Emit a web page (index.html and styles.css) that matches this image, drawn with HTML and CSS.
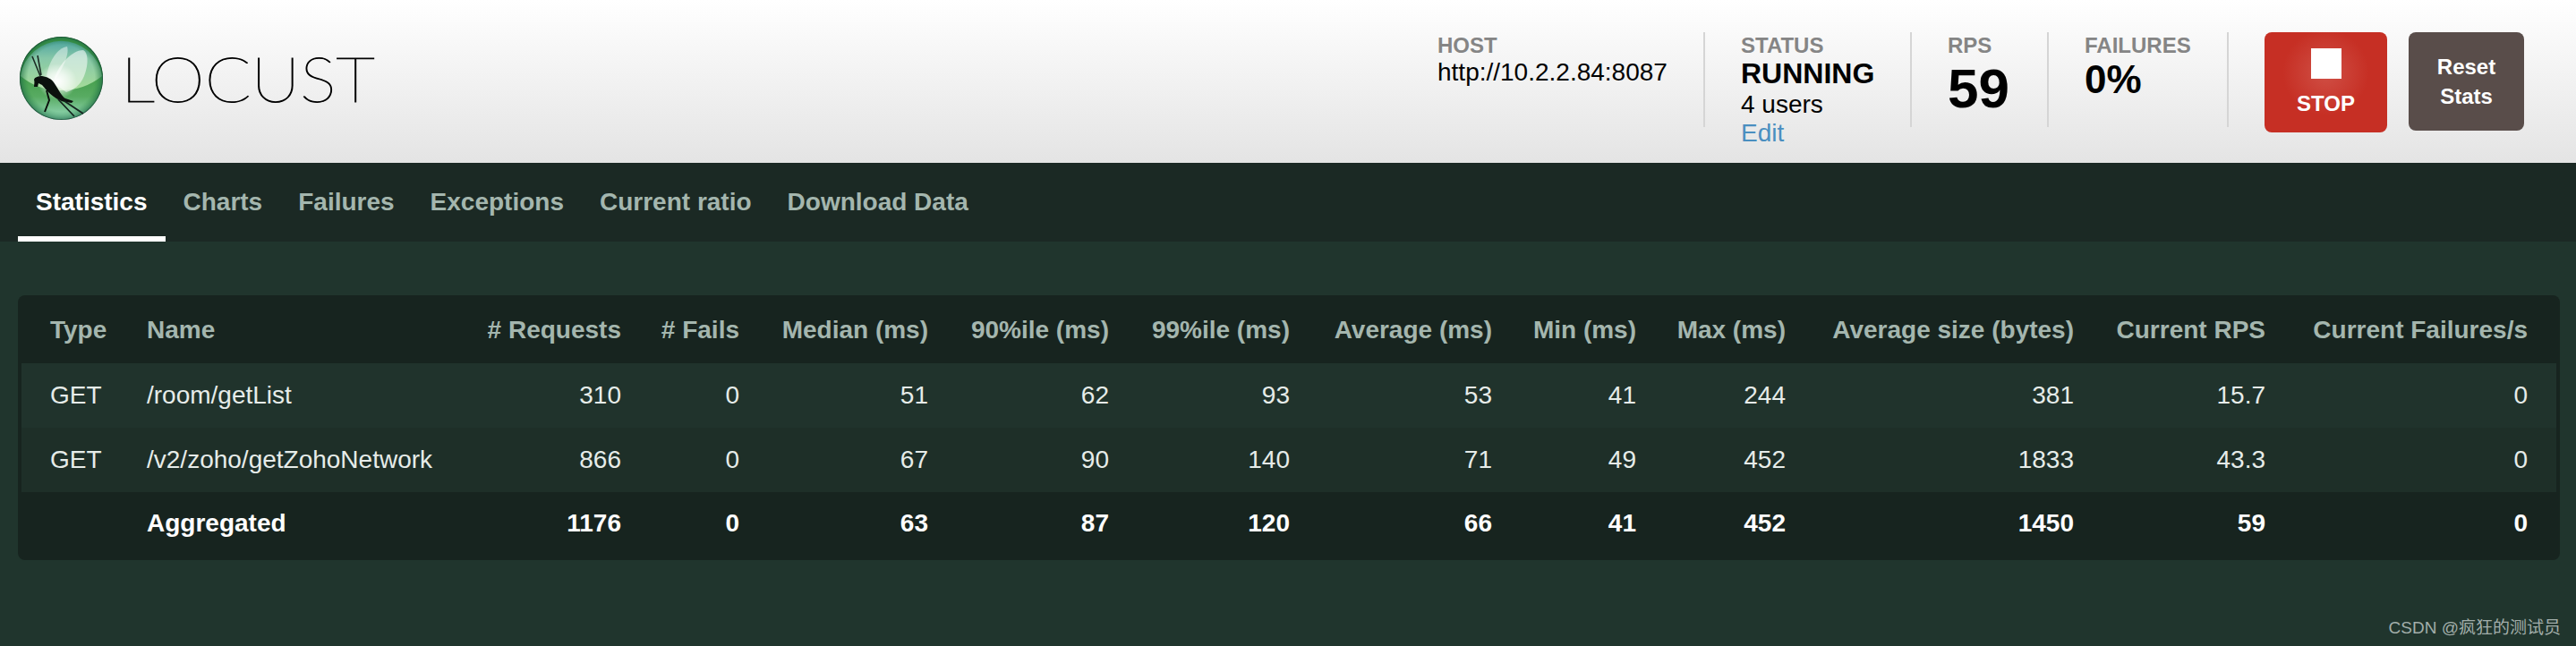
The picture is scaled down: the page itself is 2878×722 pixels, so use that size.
FILE: index.html
```html
<!DOCTYPE html>
<html lang="en">
<head>
<meta charset="utf-8">
<title>Locust</title>
<link rel="stylesheet" href="styles.css">
</head>
<body>
<header class="topbar">
  <a class="brand" href="#">
    <svg class="globe" viewBox="0 0 93 93" width="93" height="93" aria-hidden="true">
      <defs>
        <linearGradient id="sphere" x1="0" y1="0" x2="0" y2="1">
          <stop offset="0.4" stop-color="#3f9a44"/>
          <stop offset="0.72" stop-color="#58ab62"/>
          <stop offset="1" stop-color="#9adcc0"/>
        </linearGradient>
        <linearGradient id="cap" x1="0" y1="0" x2="0" y2="1">
          <stop offset="0" stop-color="#4fa5a0"/>
          <stop offset="0.35" stop-color="#86c7a8"/>
          <stop offset="1" stop-color="#a6dc98"/>
        </linearGradient>
        <radialGradient id="rim" cx="0.5" cy="0.5" r="0.5">
          <stop offset="0.8" stop-color="#2f8a4a" stop-opacity="0"/>
          <stop offset="0.97" stop-color="#1d6b44" stop-opacity="0.6"/>
          <stop offset="1" stop-color="#123f2e" stop-opacity="1"/>
        </radialGradient>
        <radialGradient id="glow" cx="0.5" cy="0.5" r="0.5">
          <stop offset="0" stop-color="#ffffff" stop-opacity="1"/>
          <stop offset="0.5" stop-color="#ffffff" stop-opacity="0.6"/>
          <stop offset="1" stop-color="#ffffff" stop-opacity="0"/>
        </radialGradient>
      </defs>
      <circle cx="46.5" cy="46.5" r="46.5" fill="url(#sphere)"/>
      <path d="M1 44A46 46 0 0 1 92 44Q72 60 46 60Q20 60 1 44Z" fill="url(#cap)"/>
      <circle cx="46.5" cy="46.5" r="46.5" fill="url(#rim)"/>
      <path d="M30 46C31 30 42 12 53 11C56 20 47 38 38 50Z" fill="#fff" fill-opacity="0.45"/>
      <path d="M38 52C40 34 58 15 71 15C77 18 77 32 72 44C68 54 60 60 52 62Z" fill="#fff" fill-opacity="0.55"/>
      <ellipse cx="42" cy="50" rx="22" ry="20" fill="url(#glow)"/>
      <path d="M14 22L23 44M20 21L24 43" stroke="#1c2c24" stroke-width="1.6" fill="none"/>
      <path d="M16 48C17 45 21 44 25 44C31 45 35 47 38 51C43 58 47 67 51 69L60 72L58 74C54 73 50 74 45 71C40 69 35 65 31 61L25 54L21 52L20 56L16 56C16 53 17 51 16 48Z" fill="#0b110d"/>
      <path d="M30 60L33 71L28 84" stroke="#0b110d" stroke-width="2" fill="none"/>
      <path d="M43 70L61 89M50 72L71 86" stroke="#14241f" stroke-width="1.8" fill="none"/>
    </svg>
    <span class="wordmark">LOCUST</span>
  </a>
  <div class="stats">
    <div class="stat stat-host">
      <div class="stat-label">HOST</div>
      <div class="stat-text">http://10.2.2.84:8087</div>
    </div>
    <div class="stat stat-status">
      <div class="stat-label">STATUS</div>
      <div class="stat-strong">RUNNING</div>
      <div class="stat-text">4 users</div>
      <a class="stat-link" href="#">Edit</a>
    </div>
    <div class="stat stat-rps">
      <div class="stat-label">RPS</div>
      <div class="stat-big">59</div>
    </div>
    <div class="stat stat-fail">
      <div class="stat-label">FAILURES</div>
      <div class="stat-pct">0%</div>
    </div>
    <div class="actions">
      <button class="btn-stop" type="button"><span class="stop-square"></span><span>STOP</span></button>
      <button class="btn-reset" type="button">Reset<br>Stats</button>
    </div>
  </div>
</header>
<nav class="tabs">
  <a class="tab tab-active" href="#">Statistics</a>
  <a class="tab" href="#">Charts</a>
  <a class="tab" href="#">Failures</a>
  <a class="tab" href="#">Exceptions</a>
  <a class="tab" href="#">Current ratio</a>
  <a class="tab" href="#">Download Data</a>
</nav>
<main class="content">
  <div class="card">
    <table class="stats-table">
      <colgroup>
        <col class="c-type"><col class="c-name"><col class="c-req"><col class="c-fail"><col class="c-med"><col class="c-p90"><col class="c-p99"><col class="c-avg"><col class="c-min"><col class="c-max"><col class="c-size"><col class="c-rps"><col class="c-fps">
      </colgroup>
      <thead>
        <tr>
          <th class="left">Type</th><th class="left">Name</th><th># Requests</th><th># Fails</th><th>Median (ms)</th><th>90%ile (ms)</th><th>99%ile (ms)</th><th>Average (ms)</th><th>Min (ms)</th><th>Max (ms)</th><th>Average size (bytes)</th><th>Current RPS</th><th>Current Failures/s</th>
        </tr>
      </thead>
      <tbody>
        <tr>
          <td class="left">GET</td><td class="left">/room/getList</td><td>310</td><td>0</td><td>51</td><td>62</td><td>93</td><td>53</td><td>41</td><td>244</td><td>381</td><td>15.7</td><td>0</td>
        </tr>
        <tr>
          <td class="left">GET</td><td class="left">/v2/zoho/getZohoNetwork</td><td>866</td><td>0</td><td>67</td><td>90</td><td>140</td><td>71</td><td>49</td><td>452</td><td>1833</td><td>43.3</td><td>0</td>
        </tr>
      </tbody>
      <tfoot>
        <tr>
          <td class="left"></td><td class="left">Aggregated</td><td>1176</td><td>0</td><td>63</td><td>87</td><td>120</td><td>66</td><td>41</td><td>452</td><td>1450</td><td>59</td><td>0</td>
        </tr>
      </tfoot>
    </table>
  </div>
</main>
<div class="watermark">CSDN @疯狂的测试员</div>
</body>
</html>
```

FILE: styles.css
```css
* { box-sizing: border-box; }
html, body { margin: 0; height: 100%; }
body {
  position: relative;
  overflow: hidden;
  background: #20352d;
  font-family: "Liberation Sans", Arial, sans-serif;
  color: #fff;
}
a { text-decoration: none; }

.topbar {
  height: 182px;
  display: flex;
  justify-content: space-between;
  background: linear-gradient(to bottom, #ffffff 0%, #e4e4e4 100%);
  color: #000;
  padding: 36px 58px 0 22px;
}
.brand { display: flex; align-items: center; height: 102px; color: #000; }
.globe { display: block; flex: none; }
.wordmark {
  display: inline-block;
  margin-left: 20px;
  font-family: "Lato", sans-serif;
  font-weight: 200;
  font-size: 71px;
  line-height: 72px;
  -webkit-text-stroke: 1px #000;
  transform: scaleX(1.07);
  transform-origin: left center;
}
.stats { display: flex; align-items: flex-start; }
.stat {
  height: 106px;
  padding: 0 40px;
  border-right: 2px solid #d5d5d5;
}
.stat-host { width: 299px; padding-left: 0; }
.stat-status { width: 231px; }
.stat-rps { width: 153px; }
.stat-fail { width: 201px; }
.stat-label {
  font-size: 24px;
  line-height: 26px;
  margin-top: 2px;
  font-weight: 700;
  color: #858585;
}
.stat-text { font-size: 28px; line-height: 34px; }
.stat-strong { font-size: 32px; font-weight: 700; line-height: 36px; }
.stat-link { display: block; font-size: 28px; line-height: 30px; color: #4a8fc0; }
.stat-big { font-size: 62px; font-weight: 700; line-height: 70px; }
.stat-pct { font-size: 44px; font-weight: 700; line-height: 46px; margin-top: 2px; }
.actions { display: flex; align-items: flex-start; gap: 24px; margin-left: 40px; }
.btn-stop, .btn-reset {
  border: 0;
  border-radius: 8px;
  color: #fff;
  font-family: inherit;
  font-weight: 700;
  font-size: 24px;
  padding: 0;
}
.btn-stop {
  width: 137px;
  height: 112px;
  display: flex;
  flex-direction: column;
  align-items: center;
  background: radial-gradient(circle at 50% 40%, #d05046 0%, #c62f24 50%);
}
.stop-square { width: 34px; height: 34px; margin-top: 18px; margin-bottom: 14px; background: #fff; }
.btn-reset {
  width: 129px;
  height: 110px;
  background: #594d4a;
  line-height: 33px;
}

.tabs {
  height: 88px;
  display: flex;
  padding: 0 20px;
  background: #1b2924;
}
.tab {
  height: 88px;
  padding: 0 20px;
  font-size: 28px;
  font-weight: 700;
  line-height: 88px;
  color: #a4b6ae;
}
.tab-active { color: #fff; border-bottom: 6px solid #fff; }

.content { padding: 60px 18px 0 20px; }
.card {
  padding: 0 4px;
  border-radius: 8px;
  background: #17241f;
}
.stats-table {
  width: 100%;
  table-layout: fixed;
  border-collapse: collapse;
  font-size: 28px;
}
.stats-table th, .stats-table td {
  text-align: right;
  padding: 0 32px 0 0;
  white-space: nowrap;
}
.stats-table .left { text-align: left; padding: 0 0 0 32px; }
.stats-table th { height: 76px; color: #a4b6ae; font-weight: 700; }
.stats-table th, .stats-table th.left { padding-top: 2px; }
.stats-table td { height: 72px; color: #e6ece9; }
.stats-table tbody tr { background: #20332c; }
.stats-table tbody tr + tr { background: #1e2f28; }
.stats-table tfoot td { height: 76px; font-weight: 700; color: #fff; }
.stats-table tfoot td, .stats-table tfoot td.left { padding-bottom: 6px; }
.c-type { width: 108px; }
.c-name { width: 401px; }
.c-req { width: 193px; }
.c-fail { width: 132px; }
.c-med { width: 211px; }
.c-p90 { width: 202px; }
.c-p99 { width: 202px; }
.c-avg { width: 226px; }
.c-min { width: 161px; }
.c-max { width: 167px; }
.c-size { width: 322px; }
.c-rps { width: 214px; }
.c-fps { width: 293px; }

.watermark {
  position: absolute;
  right: 17px;
  bottom: 9px;
  font-family: "Liberation Sans", "Noto Sans CJK SC", sans-serif;
  font-size: 19px;
  line-height: 22px;
  color: #a2aeaa;
}
```
